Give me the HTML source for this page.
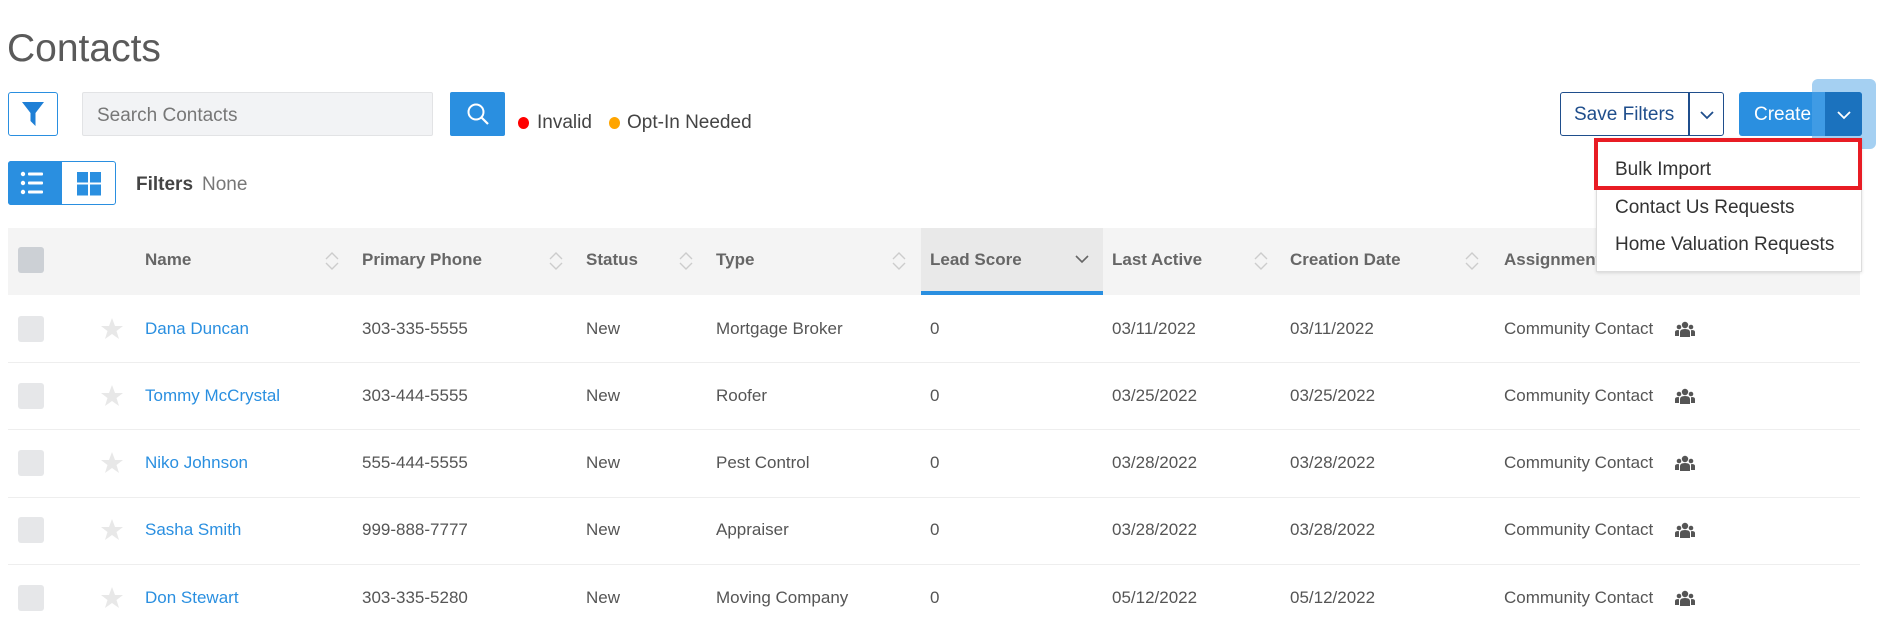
<!DOCTYPE html>
<html><head><style>
*{box-sizing:border-box;margin:0;padding:0}
body{width:1882px;height:626px;overflow:hidden;background:#fff;font-family:"Liberation Sans",sans-serif;color:#555;position:relative}
.a{position:absolute}
.t{position:absolute;white-space:nowrap;font-size:17px;line-height:20px}
.hd{font-weight:bold;color:#666}
.cb{position:absolute;left:18px;width:26px;height:26px;border-radius:3px;background:#e6e7e9}
.nm{color:#2a8fe0}
.line{position:absolute;left:8px;width:1852px;height:1px;background:#eee}
</style></head><body>
<div class="t" style="left:7px;top:26px;font-size:39px;line-height:46px;color:#5a5a5a">Contacts</div>

<div class="a" style="left:8px;top:92px;width:50px;height:44px;border:1.5px solid #2a8fe0;border-radius:3px"></div>
<svg class="a" style="left:21px;top:101px" width="24" height="26" viewBox="0 0 24 26"><path d="M1 1H23L14.5 12V25L9.5 20V12Z" fill="#1e7fd6"/></svg>

<div class="a" style="left:82px;top:92px;width:351px;height:44px;background:#f2f3f5;border:1px solid #e2e3e5;border-radius:2px"></div>
<div class="t" style="left:97px;top:106px;font-size:19px;color:#777">Search Contacts</div>
<div class="a" style="left:450px;top:92px;width:55px;height:44px;background:#2a8fe0;border-radius:2px"></div>
<svg class="a" style="left:466px;top:102px" width="24" height="24" viewBox="0 0 24 24"><circle cx="10" cy="10" r="7.5" stroke="#fff" stroke-width="2" fill="none"/><path d="M15.5 15.5L22 22" stroke="#fff" stroke-width="2.2"/></svg>
<div class="a" style="left:518px;top:117px;width:11px;height:12px;border-radius:50%;background:#f00"></div>
<div class="t" style="left:537px;top:112px;font-size:19px;line-height:22px;color:#444">Invalid</div>
<div class="a" style="left:609px;top:117px;width:11px;height:12px;border-radius:50%;background:#ffa500"></div>
<div class="t" style="left:627px;top:112px;font-size:19px;line-height:22px;color:#444">Opt-In Needed</div>

<div class="a" style="left:8px;top:161px;width:108px;height:44px;border:1.5px solid #2a8fe0;border-radius:3px"></div>
<div class="a" style="left:8px;top:161px;width:54px;height:44px;background:#2a8fe0;border-radius:3px 0 0 3px"></div>
<svg class="a" style="left:20px;top:171px" width="28" height="24" viewBox="0 0 28 24"><g fill="#fff"><circle cx="3" cy="3" r="2.2"/><circle cx="3" cy="12" r="2.2"/><circle cx="3" cy="21" r="2.2"/><rect x="8" y="1.5" width="15" height="3" rx="1"/><rect x="8" y="10.5" width="15" height="3" rx="1"/><rect x="8" y="19.5" width="15" height="3" rx="1"/></g></svg>
<svg class="a" style="left:77px;top:172px" width="24" height="24" viewBox="0 0 24 24"><g fill="#2a8fe0"><rect x="0" y="0" width="11" height="10.5"/><rect x="13" y="0" width="11" height="10.5"/><rect x="0" y="12.5" width="11" height="11"/><rect x="13" y="12.5" width="11" height="11"/></g></svg>
<div class="t" style="left:136px;top:174px;font-size:19px;line-height:22px;font-weight:bold;color:#444">Filters</div>
<div class="t" style="left:202px;top:174px;font-size:19px;line-height:22px;color:#777">None</div>

<div class="a" style="left:1560px;top:92px;width:164px;height:44px;border:1.5px solid #1f4e8c;border-radius:3px"></div>
<div class="a" style="left:1688px;top:92px;width:1.5px;height:44px;background:#1f4e8c"></div>
<div class="t" style="left:1574px;top:104px;font-size:19px;line-height:22px;color:#1f4e8c">Save Filters</div>
<svg class="a" style="left:1699px;top:110px" width="16" height="10" viewBox="0 0 16 10"><path d="M2 2L8 8L14 2" stroke="#1f4e8c" stroke-width="1.8" fill="none"/></svg>

<div class="a" style="left:1812px;top:79px;width:64px;height:70px;background:#a5d0f2;border-radius:6px"></div>
<div class="a" style="left:1739px;top:92px;width:123px;height:44px;background:#2a8fe0;border-radius:3px"></div>
<div class="a" style="left:1812px;top:92px;width:13px;height:44px;background:#3f9be5"></div>
<div class="a" style="left:1825px;top:92px;width:37px;height:44px;background:#1b72be;border-radius:0 3px 3px 0"></div>
<div class="t" style="left:1754px;top:104px;font-size:19px;line-height:22px;color:#fff">Create</div>
<svg class="a" style="left:1836px;top:110px" width="16" height="10" viewBox="0 0 16 10"><path d="M2 2L8 8L14 2" stroke="#fff" stroke-width="1.8" fill="none"/></svg>

<div class="a" style="left:8px;top:228px;width:1852px;height:67px;background:#f4f4f4"></div>
<div class="a" style="left:921px;top:228px;width:182px;height:67px;background:#e9e9e9;border-bottom:4px solid #2a8fe0"></div>
<div class="a" style="left:18px;top:247px;width:26px;height:26px;border-radius:3px;background:#ccd0d5"></div>
<div class="t hd" style="left:145px;top:250px">Name</div>
<div class="t hd" style="left:362px;top:250px">Primary Phone</div>
<div class="t hd" style="left:586px;top:250px">Status</div>
<div class="t hd" style="left:716px;top:250px">Type</div>
<div class="t hd" style="left:930px;top:250px">Lead Score</div>
<div class="t hd" style="left:1112px;top:250px">Last Active</div>
<div class="t hd" style="left:1290px;top:250px">Creation Date</div>
<div class="t hd" style="left:1504px;top:250px">Assignment</div>
<svg class="a" style="left:1074px;top:254px" width="16" height="10" viewBox="0 0 16 10"><path d="M2 2L8 8L14 2" stroke="#666" stroke-width="1.6" fill="none"/></svg>
<svg width="0" height="0" style="position:absolute"><defs><g id="s"><path d="M1 7L7 1L13 7M1 11L7 17L13 11" stroke="#ccc" stroke-width="1.4" fill="none"/></g><g id="st"><path d="M12 1L15 9H23L16.5 14L19 22L12 17L5 22L7.5 14L1 9H9Z" fill="#e8e8e8"/></g><g id="gp" fill="#555"><circle cx="10" cy="4" r="3.2"/><circle cx="4" cy="6" r="2.3"/><circle cx="16" cy="6" r="2.3"/><path d="M5 16V11Q5 8 10 8Q15 8 15 11V16Z"/><path d="M0 15V11Q0 9 3.5 9Q4 9 4 10V15Z"/><path d="M20 15V11Q20 9 16.5 9Q16 9 16 10V15Z"/></g></defs></svg>
<svg class="a" style="left:325px;top:252px" width="14" height="18"><use href="#s"/></svg>
<svg class="a" style="left:549px;top:252px" width="14" height="18"><use href="#s"/></svg>
<svg class="a" style="left:679px;top:252px" width="14" height="18"><use href="#s"/></svg>
<svg class="a" style="left:892px;top:252px" width="14" height="18"><use href="#s"/></svg>
<svg class="a" style="left:1254px;top:252px" width="14" height="18"><use href="#s"/></svg>
<svg class="a" style="left:1465px;top:252px" width="14" height="18"><use href="#s"/></svg>

<div class="cb" style="top:316px"></div><svg class="a" style="left:100px;top:317px" width="24" height="24"><use href="#st"/></svg>
<div class="t nm" style="left:145px;top:319px">Dana Duncan</div><div class="t" style="left:362px;top:319px">303-335-5555</div><div class="t" style="left:586px;top:319px">New</div><div class="t" style="left:716px;top:319px">Mortgage Broker</div><div class="t" style="left:930px;top:319px">0</div><div class="t" style="left:1112px;top:319px">03/11/2022</div><div class="t" style="left:1290px;top:319px">03/11/2022</div><div class="t" style="left:1504px;top:319px">Community Contact</div><svg class="a" style="left:1675px;top:321px" width="20" height="16"><use href="#gp"/></svg>
<div class="line" style="top:362px"></div>

<div class="cb" style="top:383px"></div><svg class="a" style="left:100px;top:384px" width="24" height="24"><use href="#st"/></svg>
<div class="t nm" style="left:145px;top:386px">Tommy McCrystal</div><div class="t" style="left:362px;top:386px">303-444-5555</div><div class="t" style="left:586px;top:386px">New</div><div class="t" style="left:716px;top:386px">Roofer</div><div class="t" style="left:930px;top:386px">0</div><div class="t" style="left:1112px;top:386px">03/25/2022</div><div class="t" style="left:1290px;top:386px">03/25/2022</div><div class="t" style="left:1504px;top:386px">Community Contact</div><svg class="a" style="left:1675px;top:388px" width="20" height="16"><use href="#gp"/></svg>
<div class="line" style="top:429px"></div>

<div class="cb" style="top:450px"></div><svg class="a" style="left:100px;top:451px" width="24" height="24"><use href="#st"/></svg>
<div class="t nm" style="left:145px;top:453px">Niko Johnson</div><div class="t" style="left:362px;top:453px">555-444-5555</div><div class="t" style="left:586px;top:453px">New</div><div class="t" style="left:716px;top:453px">Pest Control</div><div class="t" style="left:930px;top:453px">0</div><div class="t" style="left:1112px;top:453px">03/28/2022</div><div class="t" style="left:1290px;top:453px">03/28/2022</div><div class="t" style="left:1504px;top:453px">Community Contact</div><svg class="a" style="left:1675px;top:455px" width="20" height="16"><use href="#gp"/></svg>
<div class="line" style="top:497px"></div>

<div class="cb" style="top:517px"></div><svg class="a" style="left:100px;top:518px" width="24" height="24"><use href="#st"/></svg>
<div class="t nm" style="left:145px;top:520px">Sasha Smith</div><div class="t" style="left:362px;top:520px">999-888-7777</div><div class="t" style="left:586px;top:520px">New</div><div class="t" style="left:716px;top:520px">Appraiser</div><div class="t" style="left:930px;top:520px">0</div><div class="t" style="left:1112px;top:520px">03/28/2022</div><div class="t" style="left:1290px;top:520px">03/28/2022</div><div class="t" style="left:1504px;top:520px">Community Contact</div><svg class="a" style="left:1675px;top:522px" width="20" height="16"><use href="#gp"/></svg>
<div class="line" style="top:564px"></div>

<div class="cb" style="top:585px"></div><svg class="a" style="left:100px;top:586px" width="24" height="24"><use href="#st"/></svg>
<div class="t nm" style="left:145px;top:588px">Don Stewart</div><div class="t" style="left:362px;top:588px">303-335-5280</div><div class="t" style="left:586px;top:588px">New</div><div class="t" style="left:716px;top:588px">Moving Company</div><div class="t" style="left:930px;top:588px">0</div><div class="t" style="left:1112px;top:588px">05/12/2022</div><div class="t" style="left:1290px;top:588px">05/12/2022</div><div class="t" style="left:1504px;top:588px">Community Contact</div><svg class="a" style="left:1675px;top:590px" width="20" height="16"><use href="#gp"/></svg>

<div class="a" style="left:1596px;top:138px;width:266px;height:134px;background:#fff;border:1px solid #ddd;box-shadow:0 1px 3px rgba(0,0,0,.12)"></div>
<div class="a" style="left:1594px;top:138px;width:268px;height:52px;border:4px solid #e81c24"></div>
<div class="t" style="left:1615px;top:159px;font-size:19px;line-height:22px;color:#333">Bulk Import</div>
<div class="t" style="left:1615px;top:197px;font-size:19px;line-height:22px;color:#333">Contact Us Requests</div>
<div class="t" style="left:1615px;top:234px;font-size:19px;line-height:22px;color:#333">Home Valuation Requests</div>
</body></html>
